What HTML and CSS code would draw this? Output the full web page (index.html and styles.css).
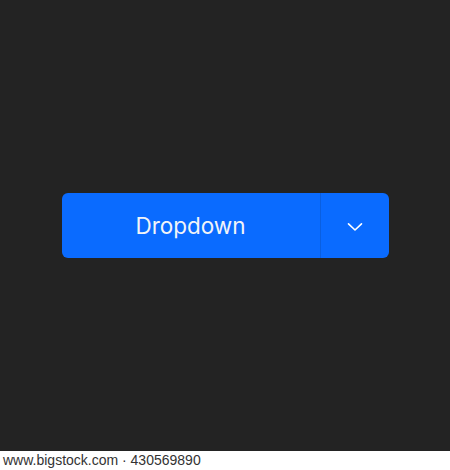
FILE: index.html
```html
<!DOCTYPE html>
<html lang="en">
<head>
<meta charset="utf-8">
<title>Dropdown</title>
<link rel="stylesheet" href="styles.css">
</head>
<body>
  <main class="stage">
    <div class="split-button">
      <button class="split-button__main" type="button">Dropdown</button>
      <button class="split-button__toggle" type="button" aria-label="Open menu">
        <svg width="16" height="10" viewBox="0 0 16 10" aria-hidden="true">
          <path d="M1.5 1.8 L8 8 L14.5 1.8" fill="none" stroke="#ffffff" stroke-width="1.6" stroke-linecap="round" stroke-linejoin="round"/>
        </svg>
      </button>
    </div>
  </main>
  <footer class="credit">www.bigstock.com · 430569890</footer>
</body>
</html>
```

FILE: styles.css
```css
html, body {
  margin: 0;
  padding: 0;
}

body {
  width: 450px;
  height: 470px;
  display: flex;
  flex-direction: column;
  background: #ffffff;
  overflow: hidden;
}

.stage {
  height: 451px;
  background: #232323;
  display: flex;
  align-items: center;
  justify-content: center;
}

.split-button {
  display: flex;
  width: 327px;
  height: 65px;
  border-radius: 6px;
  overflow: hidden;
  background: #0a6bff;
}

.split-button button {
  border: 0;
  margin: 0;
  padding: 0;
  background: transparent;
  color: #f2f4f8;
  display: flex;
  align-items: center;
  justify-content: center;
  cursor: pointer;
}

.split-button__main {
  flex: 0 0 259px;
  font-family: Inter, "Noto Sans", sans-serif;
  font-size: 22.5px;
  font-weight: 400;
  border-right: 1px solid #0a5fe0 !important;
}

.split-button__toggle {
  flex: 1;
  padding-top: 2px !important;
}

.credit {
  flex: 1;
  padding-left: 3px;
  font-family: "Liberation Sans", Arial, sans-serif;
  font-size: 14px;
  line-height: 18px;
  color: #333333;
}
```
